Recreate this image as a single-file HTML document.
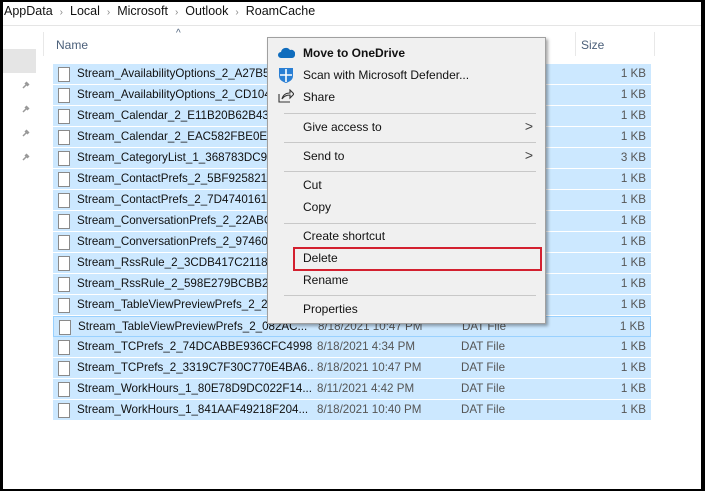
<!DOCTYPE html>
<html><head><style>
*{margin:0;padding:0;box-sizing:border-box}
body{width:705px;height:491px;background:#fff;font-family:"Liberation Sans",sans-serif;font-size:12px;color:#000;position:relative;overflow:hidden}
.frame{position:absolute;left:0;top:0;width:705px;height:491px;border:2px solid #000;border-left-width:3px;border-right-width:4px;z-index:20;pointer-events:none}
.bc{position:absolute;left:4px;top:4px;font-size:12.5px;color:#111;white-space:nowrap}
.bc span.s{color:#888;margin:0 7px;font-size:10px}
.topline{position:absolute;left:3px;right:4px;top:25px;height:1px;background:#e5e5e5}
.nav{position:absolute;left:3px;top:49px;width:33px;height:24px;background:#e5e5e5}
.pin{position:absolute;left:22px;width:8px;height:8px}
.hdr{position:absolute;top:38px;color:#4c607a;font-size:12px}
.vl{position:absolute;top:32px;width:1px;height:24px;background:#e8e8e8}
.row{position:absolute;left:53px;width:598px;height:21px;background:#cce8ff;border-bottom:1px solid #fff;font-size:11.6px}
.row.f{border:1px solid #99d1ff}
.ic{position:absolute;left:5px;top:3px;width:12px;height:15px;border:1px solid #8a8a8a;background:#fff}
.nm{position:absolute;left:24px;top:3px;white-space:nowrap;color:#111;width:236px;overflow:hidden}
.dt{position:absolute;left:264px;top:3px;color:#555;white-space:nowrap}
.ty{position:absolute;left:408px;top:3px;color:#555}
.sz{position:absolute;right:5px;top:3px;color:#555}
.menu{position:absolute;left:267px;top:37px;width:279px;height:287px;background:#f0f0f0;border:1px solid #a0a0a0;box-shadow:2px 2px 3px rgba(0,0,0,.35);z-index:5}
.mi{position:absolute;left:35px;font-size:12px;color:#111;white-space:nowrap}
.sep{position:absolute;left:16px;right:9px;height:1px;background:#c8c8c8}
.arr{position:absolute;right:12px;font-size:14px;color:#444}
.del{position:absolute;left:25px;top:209px;width:249px;height:24px;border:2px solid #d3202f}
</style></head><body>
<div class="bc">AppData<span class="s">›</span>Local<span class="s">›</span>Microsoft<span class="s">›</span>Outlook<span class="s">›</span>RoamCache</div>
<div class="topline"></div>
<div class="nav"></div>
<svg class="pin" style="top:81px" viewBox="0 0 8 8"><path d="M1 7l3-3M3 2l3 3M4 1l3 3" stroke="#999" stroke-width="1.5"/></svg>
<svg class="pin" style="top:105px" viewBox="0 0 8 8"><path d="M1 7l3-3M3 2l3 3M4 1l3 3" stroke="#999" stroke-width="1.5"/></svg>
<svg class="pin" style="top:129px" viewBox="0 0 8 8"><path d="M1 7l3-3M3 2l3 3M4 1l3 3" stroke="#999" stroke-width="1.5"/></svg>
<svg class="pin" style="top:153px" viewBox="0 0 8 8"><path d="M1 7l3-3M3 2l3 3M4 1l3 3" stroke="#999" stroke-width="1.5"/></svg>
<div class="vl" style="left:43px"></div><div class="vl" style="left:575px"></div><div class="vl" style="left:654px"></div>
<div class="hdr" style="left:56px">Name</div>
<div class="hdr" style="left:176px;top:28px;font-size:10px">^</div>
<div class="hdr" style="left:581px">Size</div>

<div class="row" style="top:64px"><div class="ic"></div><div class="nm">Stream_AvailabilityOptions_2_A27B5</div><div class="sz">1 KB</div></div>
<div class="row" style="top:85px"><div class="ic"></div><div class="nm">Stream_AvailabilityOptions_2_CD104</div><div class="sz">1 KB</div></div>
<div class="row" style="top:106px"><div class="ic"></div><div class="nm">Stream_Calendar_2_E11B20B62B4376</div><div class="sz">1 KB</div></div>
<div class="row" style="top:127px"><div class="ic"></div><div class="nm">Stream_Calendar_2_EAC582FBE0EAD</div><div class="sz">1 KB</div></div>
<div class="row" style="top:148px"><div class="ic"></div><div class="nm">Stream_CategoryList_1_368783DC9C</div><div class="sz">3 KB</div></div>
<div class="row" style="top:169px"><div class="ic"></div><div class="nm">Stream_ContactPrefs_2_5BF925821E8</div><div class="sz">1 KB</div></div>
<div class="row" style="top:190px"><div class="ic"></div><div class="nm">Stream_ContactPrefs_2_7D47401617</div><div class="sz">1 KB</div></div>
<div class="row" style="top:211px"><div class="ic"></div><div class="nm">Stream_ConversationPrefs_2_22ABC</div><div class="sz">1 KB</div></div>
<div class="row" style="top:232px"><div class="ic"></div><div class="nm">Stream_ConversationPrefs_2_97460D</div><div class="sz">1 KB</div></div>
<div class="row" style="top:253px"><div class="ic"></div><div class="nm">Stream_RssRule_2_3CDB417C211853</div><div class="sz">1 KB</div></div>
<div class="row" style="top:274px"><div class="ic"></div><div class="nm">Stream_RssRule_2_598E279BCBB2AE</div><div class="sz">1 KB</div></div>
<div class="row" style="top:295px"><div class="ic"></div><div class="nm">Stream_TableViewPreviewPrefs_2_2D</div><div class="sz">1 KB</div></div>
<div class="row f" style="top:316px"><div class="ic"></div><div class="nm">Stream_TableViewPreviewPrefs_2_082AC...</div><div class="dt">8/18/2021 10:47 PM</div><div class="ty">DAT File</div><div class="sz">1 KB</div></div>
<div class="row" style="top:337px"><div class="ic"></div><div class="nm">Stream_TCPrefs_2_74DCABBE936CFC4998...</div><div class="dt">8/18/2021 4:34 PM</div><div class="ty">DAT File</div><div class="sz">1 KB</div></div>
<div class="row" style="top:358px"><div class="ic"></div><div class="nm">Stream_TCPrefs_2_3319C7F30C770E4BA6...</div><div class="dt">8/18/2021 10:47 PM</div><div class="ty">DAT File</div><div class="sz">1 KB</div></div>
<div class="row" style="top:379px"><div class="ic"></div><div class="nm">Stream_WorkHours_1_80E78D9DC022F14...</div><div class="dt">8/11/2021 4:42 PM</div><div class="ty">DAT File</div><div class="sz">1 KB</div></div>
<div class="row" style="top:400px"><div class="ic"></div><div class="nm">Stream_WorkHours_1_841AAF49218F204...</div><div class="dt">8/18/2021 10:40 PM</div><div class="ty">DAT File</div><div class="sz">1 KB</div></div>

<div class="menu">
<svg style="position:absolute;left:10px;top:9px" width="17" height="11" viewBox="0 0 17 11"><path d="M3 11 A3 3 0 0 1 3 5 A5 5 0 0 1 12 3 A4 4 0 0 1 17 8 A3 3 0 0 1 14 11 Z" fill="#0f6cbd"/></svg>
<div class="mi" style="top:8px;font-weight:bold">Move to OneDrive</div>
<svg style="position:absolute;left:10px;top:29px" width="16" height="16" viewBox="0 0 16 16"><path d="M1 1h14v8c0 4-4 6-7 7C5 15 1 13 1 9z" fill="#2a7fd4"/><path d="M8 2v13M2 8h12" stroke="#fff" stroke-width="1.6"/></svg>
<div class="mi" style="top:30px">Scan with Microsoft Defender...</div>
<svg style="position:absolute;left:10px;top:51px" width="16" height="14" viewBox="0 0 16 14"><path d="M1 5v8h11M4 10c1-4 4-6 8-6V1l4 4-4 4V6c-3 0-6 1-8 4z" fill="none" stroke="#333" stroke-width="1.1"/></svg>
<div class="mi" style="top:52px">Share</div>
<div class="sep" style="top:75px"></div>
<div class="mi" style="top:82px">Give access to</div><div class="arr" style="top:80px">&gt;</div>
<div class="sep" style="top:104px"></div>
<div class="mi" style="top:111px">Send to</div><div class="arr" style="top:109px">&gt;</div>
<div class="sep" style="top:133px"></div>
<div class="mi" style="top:140px">Cut</div>
<div class="mi" style="top:162px">Copy</div>
<div class="sep" style="top:185px"></div>
<div class="mi" style="top:191px">Create shortcut</div>
<div class="mi" style="top:213px">Delete</div>
<div class="del"></div>
<div class="mi" style="top:235px">Rename</div>
<div class="sep" style="top:257px"></div>
<div class="mi" style="top:264px">Properties</div>
</div>
<div class="frame"></div>
</body></html>
